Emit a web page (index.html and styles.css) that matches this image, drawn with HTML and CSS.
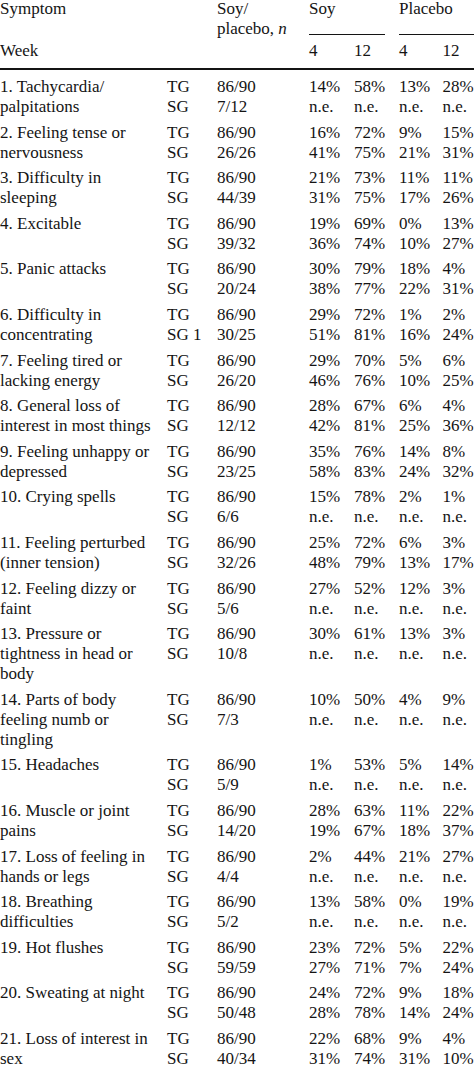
FILE: index.html
```html
<!DOCTYPE html>
<html>
<head>
<meta charset="utf-8">
<link rel="stylesheet" href="styles.css">
</head>
<body>
<div class="page">
  <div class="head">
    <div class="hrow top">
      <div class="c1">Symptom</div>
      <div></div>
      <div>Soy/<br>placebo, <i>n</i></div>
      <div class="span soy">Soy</div>
      <div class="span plac">Placebo</div>
    </div>
    <div class="hrow week">
      <div class="c1">Week</div><div></div><div></div>
      <div>4</div><div>12</div><div>4</div><div>12</div>
    </div>
  </div>
  <div class="tbody">
    <div class="grp"><div class="c1">1. Tachycardia/<br>palpitations</div><div>TG<br>SG</div><div>86/90<br>7/12</div><div>14%<br>n.e.</div><div>58%<br>n.e.</div><div>13%<br>n.e.</div><div>28%<br>n.e.</div></div>
    <div class="grp"><div class="c1">2. Feeling tense or<br>nervousness</div><div>TG<br>SG</div><div>86/90<br>26/26</div><div>16%<br>41%</div><div>72%<br>75%</div><div>9%<br>21%</div><div>15%<br>31%</div></div>
    <div class="grp"><div class="c1">3. Difficulty in<br>sleeping</div><div>TG<br>SG</div><div>86/90<br>44/39</div><div>21%<br>31%</div><div>73%<br>75%</div><div>11%<br>17%</div><div>11%<br>26%</div></div>
    <div class="grp"><div class="c1">4. Excitable</div><div>TG<br>SG</div><div>86/90<br>39/32</div><div>19%<br>36%</div><div>69%<br>74%</div><div>0%<br>10%</div><div>13%<br>27%</div></div>
    <div class="grp"><div class="c1">5. Panic attacks</div><div>TG<br>SG</div><div>86/90<br>20/24</div><div>30%<br>38%</div><div>79%<br>77%</div><div>18%<br>22%</div><div>4%<br>31%</div></div>
    <div class="grp"><div class="c1">6. Difficulty in<br>concentrating</div><div>TG<br>SG 1</div><div>86/90<br>30/25</div><div>29%<br>51%</div><div>72%<br>81%</div><div>1%<br>16%</div><div>2%<br>24%</div></div>
    <div class="grp"><div class="c1">7. Feeling tired or<br>lacking energy</div><div>TG<br>SG</div><div>86/90<br>26/20</div><div>29%<br>46%</div><div>70%<br>76%</div><div>5%<br>10%</div><div>6%<br>25%</div></div>
    <div class="grp"><div class="c1">8. General loss of<br>interest in most things</div><div>TG<br>SG</div><div>86/90<br>12/12</div><div>28%<br>42%</div><div>67%<br>81%</div><div>6%<br>25%</div><div>4%<br>36%</div></div>
    <div class="grp"><div class="c1">9. Feeling unhappy or<br>depressed</div><div>TG<br>SG</div><div>86/90<br>23/25</div><div>35%<br>58%</div><div>76%<br>83%</div><div>14%<br>24%</div><div>8%<br>32%</div></div>
    <div class="grp"><div class="c1">10. Crying spells</div><div>TG<br>SG</div><div>86/90<br>6/6</div><div>15%<br>n.e.</div><div>78%<br>n.e.</div><div>2%<br>n.e.</div><div>1%<br>n.e.</div></div>
    <div class="grp"><div class="c1">11. Feeling perturbed<br>(inner tension)</div><div>TG<br>SG</div><div>86/90<br>32/26</div><div>25%<br>48%</div><div>72%<br>79%</div><div>6%<br>13%</div><div>3%<br>17%</div></div>
    <div class="grp"><div class="c1">12. Feeling dizzy or<br>faint</div><div>TG<br>SG</div><div>86/90<br>5/6</div><div>27%<br>n.e.</div><div>52%<br>n.e.</div><div>12%<br>n.e.</div><div>3%<br>n.e.</div></div>
    <div class="grp"><div class="c1">13. Pressure or<br>tightness in head or<br>body</div><div>TG<br>SG</div><div>86/90<br>10/8</div><div>30%<br>n.e.</div><div>61%<br>n.e.</div><div>13%<br>n.e.</div><div>3%<br>n.e.</div></div>
    <div class="grp"><div class="c1">14. Parts of body<br>feeling numb or<br>tingling</div><div>TG<br>SG</div><div>86/90<br>7/3</div><div>10%<br>n.e.</div><div>50%<br>n.e.</div><div>4%<br>n.e.</div><div>9%<br>n.e.</div></div>
    <div class="grp"><div class="c1">15. Headaches</div><div>TG<br>SG</div><div>86/90<br>5/9</div><div>1%<br>n.e.</div><div>53%<br>n.e.</div><div>5%<br>n.e.</div><div>14%<br>n.e.</div></div>
    <div class="grp"><div class="c1">16. Muscle or joint<br>pains</div><div>TG<br>SG</div><div>86/90<br>14/20</div><div>28%<br>19%</div><div>63%<br>67%</div><div>11%<br>18%</div><div>22%<br>37%</div></div>
    <div class="grp"><div class="c1">17. Loss of feeling in<br>hands or legs</div><div>TG<br>SG</div><div>86/90<br>4/4</div><div>2%<br>n.e.</div><div>44%<br>n.e.</div><div>21%<br>n.e.</div><div>27%<br>n.e.</div></div>
    <div class="grp"><div class="c1">18. Breathing<br>difficulties</div><div>TG<br>SG</div><div>86/90<br>5/2</div><div>13%<br>n.e.</div><div>58%<br>n.e.</div><div>0%<br>n.e.</div><div>19%<br>n.e.</div></div>
    <div class="grp"><div class="c1">19. Hot flushes</div><div>TG<br>SG</div><div>86/90<br>59/59</div><div>23%<br>27%</div><div>72%<br>71%</div><div>5%<br>7%</div><div>22%<br>24%</div></div>
    <div class="grp"><div class="c1">20. Sweating at night</div><div>TG<br>SG</div><div>86/90<br>50/48</div><div>24%<br>28%</div><div>72%<br>78%</div><div>9%<br>14%</div><div>18%<br>24%</div></div>
    <div class="grp"><div class="c1">21. Loss of interest in<br>sex</div><div>TG<br>SG</div><div>86/90<br>40/34</div><div>22%<br>31%</div><div>68%<br>74%</div><div>9%<br>31%</div><div>4%<br>10%</div></div>
  </div>
</div>
</body>
</html>
```
FILE: styles.css
```css
html, body {
  margin: 0;
  padding: 0;
  background: #ffffff;
  overflow: hidden;
}
body {
  font-family: "Liberation Serif", "Times New Roman", serif;
  font-size: 17px;
  line-height: 20px;
  color: #141414;
}
.page {
  width: 530px;
  margin-top: -0.6px;
}
.hrow, .grp {
  display: grid;
  grid-template-columns: 167px 50px 92px 45px 45px 43.5px 1fr;
  white-space: nowrap;
}
.hrow.top {
  align-items: start;
}
.span {
  grid-column: span 2;
}
.soy, .plac {
  padding-bottom: 14.7px;
  border-bottom: 1.3px solid #141414;
}
.soy {
  margin-right: 14px;
}
.week {
  margin-top: 1.2px;
  padding-bottom: 7px;
  border-bottom: 2.5px solid #141414;
}
.tbody {
  padding-top: 4.7px;
}
.grp {
  padding: 2.8px 0;
}
```
